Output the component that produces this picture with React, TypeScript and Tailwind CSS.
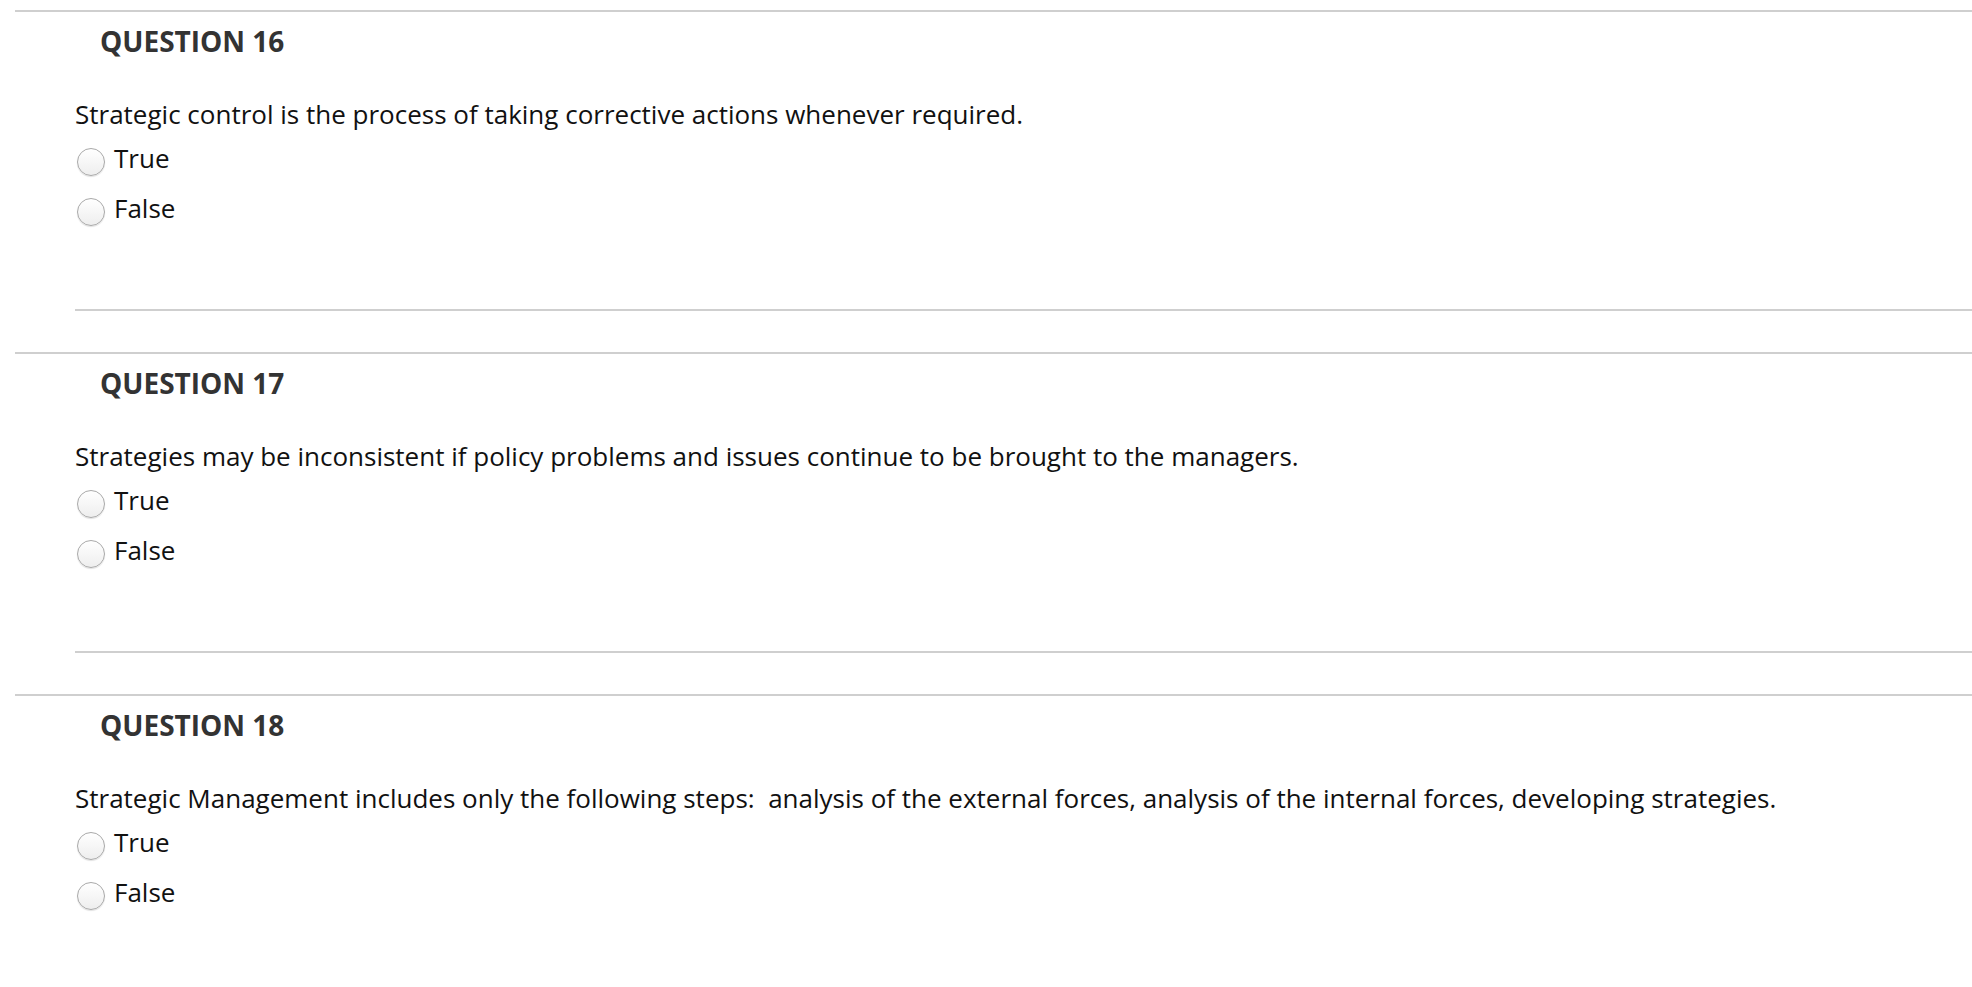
import React from 'react';

const questions = [
  {
    num: 16,
    text: 'Strategic control is the process of taking corrective actions whenever required.',
  },
  {
    num: 17,
    text: 'Strategies may be inconsistent if policy problems and issues continue to be brought to the managers.',
  },
  {
    num: 18,
    text: 'Strategic Management includes only the following steps:\u00a0 analysis of the external forces, analysis of the internal forces, developing strategies.',
  },
];

function Radio({ label }: { label: string }) {
  return (
    <label className="flex items-center h-[50px]">
      <span className="ml-[2px] w-[28px] h-[28px] rounded-full border border-[#a9a9a9] bg-gradient-to-b from-[#ffffff] to-[#eeeeee] shadow-[0_1px_1px_rgba(0,0,0,0.12)]" />
      <span className="ml-[9px] mb-[8px] text-[26px] leading-[36px] text-[#111]">{label}</span>
    </label>
  );
}

function Question({ num, text }: { num: number; text: string }) {
  return (
    <div className="ml-[15px] border-t-2 border-[#cfcfcf]">
      <h2 className="pl-[85px] pt-[11px] text-[28px] leading-[36px] font-bold text-[#333]">
        QUESTION {num}
      </h2>
      <div className="ml-[60px] pt-[37px]">
        <p className="text-[26px] leading-[36px] text-[#111]">{text}</p>
        <div className="flex flex-col mt-[5px]">
          <Radio label="True" />
          <Radio label="False" />
        </div>
        <div className="h-[74px] border-b-2 border-[#cfcfcf]" />
      </div>
      <div className="h-[41px]" />
    </div>
  );
}

export default function App() {
  return (
    <div
      className="min-h-screen bg-white pt-[10px] overflow-hidden"
      style={{ fontFamily: '"Open Sans", "Noto Sans", sans-serif' }}
    >
      {questions.map((q) => (
        <Question key={q.num} num={q.num} text={q.text} />
      ))}
    </div>
  );
}
